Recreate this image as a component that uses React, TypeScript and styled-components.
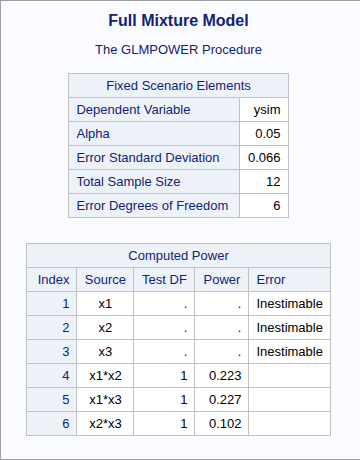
import styled, { createGlobalStyle } from 'styled-components';

const GlobalStyle = createGlobalStyle`
  html, body {
    margin: 0;
    padding: 0;
    background: #fafbfe;
  }
  * {
    box-sizing: border-box;
  }
`;

const scenario = [
  { label: 'Dependent Variable', value: 'ysim' },
  { label: 'Alpha', value: '0.05' },
  { label: 'Error Standard Deviation', value: '0.066' },
  { label: 'Total Sample Size', value: '12' },
  { label: 'Error Degrees of Freedom', value: '6' },
];

const power = [
  { index: 1, source: 'x1', df: '.', power: '.', error: 'Inestimable' },
  { index: 2, source: 'x2', df: '.', power: '.', error: 'Inestimable' },
  { index: 3, source: 'x3', df: '.', power: '.', error: 'Inestimable' },
  { index: 4, source: 'x1*x2', df: '1', power: '0.223', error: '' },
  { index: 5, source: 'x1*x3', df: '1', power: '0.227', error: '' },
  { index: 6, source: 'x2*x3', df: '1', power: '0.102', error: '' },
];

const App = () => {
  return (
    <Page>
      <GlobalStyle />
      <Title>Full Mixture Model</Title>
      <Subtitle>The GLMPOWER Procedure</Subtitle>

      <Table $width={219}>
        <colgroup>
          <Col $width={171} />
          <Col $width={48} />
        </colgroup>
        <thead>
          <tr>
            <HeadCell colSpan={2} $align="center">Fixed Scenario Elements</HeadCell>
          </tr>
        </thead>
        <tbody>
          {scenario.map((row) => (
            <tr key={row.label}>
              <HeadCell $align="left">{row.label}</HeadCell>
              <DataCell $align="right">{row.value}</DataCell>
            </tr>
          ))}
        </tbody>
      </Table>

      <PowerTable $width={303}>
        <colgroup>
          <Col $width={50} />
          <Col $width={57} />
          <Col $width={61} />
          <Col $width={54} />
          <Col $width={81} />
        </colgroup>
        <thead>
          <tr>
            <HeadCell colSpan={5} $align="center">Computed Power</HeadCell>
          </tr>
          <tr>
            <HeadCell $align="right">Index</HeadCell>
            <HeadCell $align="center">Source</HeadCell>
            <HeadCell $align="center">Test DF</HeadCell>
            <HeadCell $align="center">Power</HeadCell>
            <HeadCell $align="left">Error</HeadCell>
          </tr>
        </thead>
        <tbody>
          {power.map((row) => (
            <tr key={row.index}>
              <HeadCell $align="right">{row.index}</HeadCell>
              <DataCell $align="center">{row.source}</DataCell>
              <DataCell $align="right">{row.df}</DataCell>
              <DataCell $align="right">{row.power}</DataCell>
              <DataCell $align="left">{row.error}</DataCell>
            </tr>
          ))}
        </tbody>
      </PowerTable>
    </Page>
  );
};

const Page = styled.div`
  width: 360px;
  height: 460px;
  border: 1px solid #a0a0a0;
  border-right: none;
  background: #fafbfe;
  display: flex;
  flex-direction: column;
  align-items: center;
  padding: 10px 4px 0 0;
  font-family: 'Liberation Sans', Arial, sans-serif;
`;

const Title = styled.div`
  font-size: 16px;
  font-weight: bold;
  line-height: 20px;
  color: #112277;
`;

const Subtitle = styled.div`
  margin-top: 11px;
  font-size: 13px;
  line-height: 16px;
  color: #112277;
`;

const Table = styled.table<{ $width: number }>`
  margin-top: 15px;
  width: ${(p) => p.$width}px;
  table-layout: fixed;
  border-collapse: collapse;
  border: 1px solid #c1c1c1;
  font-size: 13px;
`;

const PowerTable = styled(Table)`
  margin-top: 25px;
`;

const Col = styled.col<{ $width: number }>`
  width: ${(p) => p.$width}px;
`;

const Cell = styled.td<{ $align: 'left' | 'center' | 'right' }>`
  border: 1px solid #c1c1c1;
  padding: 4px 7px;
  line-height: 15px;
  height: 24px;
  text-align: ${(p) => p.$align};
  white-space: nowrap;
  overflow: hidden;
`;

const HeadCell = styled(Cell).attrs({ as: 'th' })`
  background: #edf2f9;
  color: #112277;
  font-weight: normal;
`;

const DataCell = styled(Cell)`
  background: #ffffff;
  color: #000000;
`;

export default App;
